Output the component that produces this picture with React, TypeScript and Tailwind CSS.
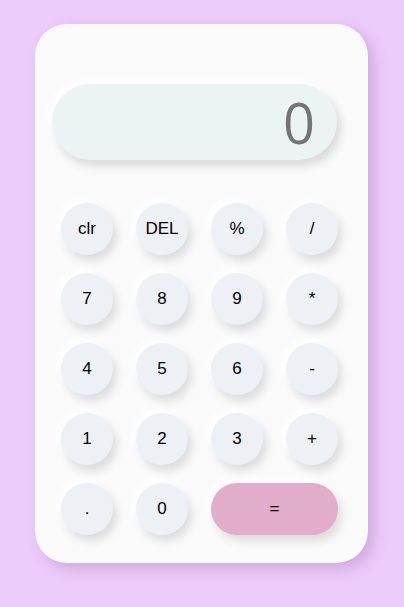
import React from "react";

const keys: { label: string; wide?: boolean; eq?: boolean }[] = [
  { label: "clr" }, { label: "DEL" }, { label: "%" }, { label: "/" },
  { label: "7" }, { label: "8" }, { label: "9" }, { label: "*" },
  { label: "4" }, { label: "5" }, { label: "6" }, { label: "-" },
  { label: "1" }, { label: "2" }, { label: "3" }, { label: "+" },
  { label: "." }, { label: "0" }, { label: "=", wide: true, eq: true },
];

export default function App() {
  return (
    <div className="w-[404px] h-[607px] bg-[#edcbfb] pt-[24px] pl-[35px]" style={{ fontFamily: '"Liberation Sans", Arial, sans-serif' }}>
      <div className="w-[333px] h-[539px] rounded-[32px] bg-[#fafafa] shadow-[6px_6px_14px_rgba(120,70,140,0.25)] pt-[60px]">
        <div className="ml-[17px] w-[285px] h-[76px] rounded-[38px] bg-[#ecf3f3] shadow-[4px_6px_10px_rgba(0,0,0,0.13),-4px_-4px_8px_#ffffff] flex items-center justify-end pr-[22px]">
          <span className="text-[56px] leading-none text-[#747474]" style={{ fontFamily: '"Open Sans", sans-serif' }}>0</span>
        </div>
        <div className="ml-[26px] mt-[43px] grid grid-cols-[52px_52px_52px_52px] gap-x-[23px] gap-y-[18px]">
          {keys.map((k) => (
            <button
              key={k.label}
              className={
                k.eq
                  ? "col-span-2 h-[52px] rounded-full bg-[#e2adca] text-[17px] text-black shadow-[4px_6px_10px_rgba(0,0,0,0.12),-4px_-4px_8px_#ffffff] flex items-center justify-center"
                  : "w-[52px] h-[52px] rounded-full bg-[#edf1f5] text-[17px] text-black shadow-[4px_6px_10px_rgba(0,0,0,0.12),-4px_-4px_8px_#ffffff] flex items-center justify-center"
              }
            >
              {k.label}
            </button>
          ))}
        </div>
      </div>
    </div>
  );
}
